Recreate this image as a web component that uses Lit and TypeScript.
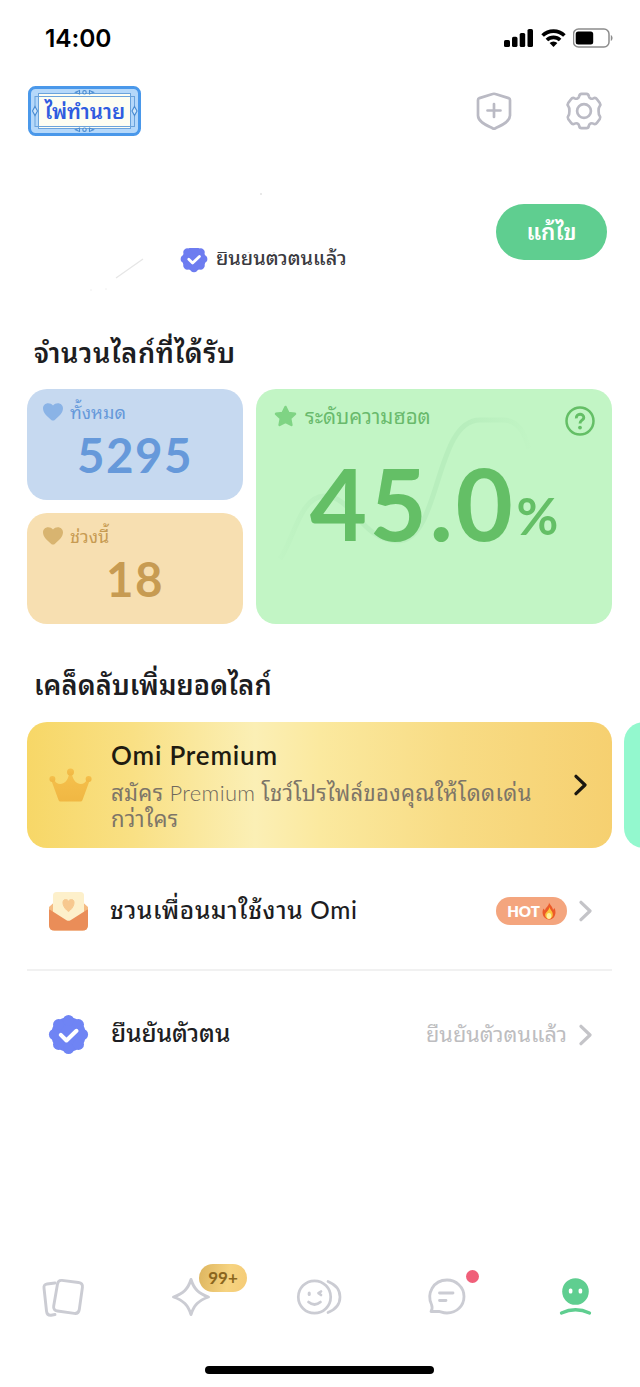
import { LitElement, html, css, svg } from "lit";
import { customElement } from "lit/decorators.js";

const base = css`
  :host { --face: Lato, "Noto Sans Thai Looped", "Noto Looped Thai", Loma, "Noto Sans Thai", "Noto Sans", sans-serif; }
`;

const heart = (color: string) => html`<svg class="heart" width="20" height="18" viewBox="0 0 20 18">
  <path fill=${color} d="M10 2.400C11.300.900 13 .200 14.800.200 17.800.200 20 2.400 20 5.300c0 4.800-4.600 8.400-8 11.400-1.200 1.200-2.800 1.200-4 0C4.600 13.700 0 10.100 0 5.300 0 2.400 2.200.200 5.200.200 7 .200 8.700.900 10 2.400z"/>
</svg>`;

const seal = (size: number, color: string) => html`<svg class="seal" width=${size} height=${size} viewBox="-20 -20 40 40">
  <g fill=${color}>
    <circle r="16.900"/>
    ${[0, 1, 2, 3, 4, 5, 6, 7].map((i) => svg`<circle r="5.400" cy="-13.700" transform="rotate(${i * 45})"/>`)}
  </g>
  <path d="M-7.500.400-2 5.800 7.800-3.600" fill="none" stroke="#fff" stroke-width="4" stroke-linecap="round" stroke-linejoin="round"/>
</svg>`;

const chevron = (color: string) => html`<svg width="14" height="22" viewBox="0 0 14 22">
  <path d="M2 2.300 11 11 2 19.700" fill="none" stroke=${color} stroke-width="3.200" stroke-linecap="round" stroke-linejoin="round"/>
</svg>`;

@customElement("status-bar")
class StatusBar extends LitElement {
  static styles = css`
    :host { display: flex; height: 76px; align-items: center; justify-content: space-between; padding: 0 26px 0 45px; box-sizing: border-box; }
    .time { font: 600 24.500px/30px Inter, sans-serif; color: #000; letter-spacing: -0.1px; }
    .system { display: flex; align-items: center; }
    .wifi { margin: 0 7px 0 7px; }
  `;
  render() {
    return html`
      <span class="time">14:00</span>
      <div class="system">
        <svg width="30" height="20" viewBox="0 0 30 20">
          <rect x="0" y="12" width="6" height="7" rx="1.600"/><rect x="8" y="8.800" width="5.500" height="10.200" rx="1.600"/>
          <rect x="15.700" y="5" width="5.500" height="14" rx="1.600"/><rect x="23.500" y="1" width="5.500" height="18" rx="1.600"/>
        </svg>
        <svg class="wifi" width="25" height="20" viewBox="0 0 25 20">
          <g fill="none" stroke="#000" stroke-width="3.700"><path d="M1.600 7.500a15.600 15.600 0 0 1 21.800 0"/><path d="M5.900 12a9.600 9.600 0 0 1 13.200 0"/></g>
          <path d="M12.500 19 8.600 15.100a5.600 5.600 0 0 1 7.800 0z"/>
        </svg>
        <svg width="41" height="20" viewBox="0 0 41 20">
          <rect x="0.500" y="1" width="35.500" height="18" rx="5" fill="none" stroke="#8c8c8c" stroke-width="1.500"/>
          <rect x="2.700" y="3.500" width="17.500" height="13" rx="2.500"/>
          <path d="M37.800 7v6c2.300-1 2.300-5 0-6z" fill="#8c8c8c"/>
        </svg>
      </div>`;
  }
}

@customElement("top-bar")
class TopBar extends LitElement {
  static styles = [base, css`
    :host { display: flex; height: 70px; padding: 0 36px 0 28px; align-items: center; box-sizing: border-box; }
    .tarot { display: grid; width: 113px; height: 50px; margin-right: auto; }
    .tarot > * { grid-area: 1 / 1; }
    .label { place-self: center; font: 600 20.700px/30px var(--face); color: #2f5be0; white-space: nowrap; padding-left: 1px; }
    .gear { margin-left: 52px; }
  `];
  render() {
    return html`
      <div class="tarot">
        <svg width="113" height="50" viewBox="0 0 113 50">
          <rect x="1.500" y="1.500" width="110" height="47" rx="6" fill="#b5d8fa" stroke="#4a98ea" stroke-width="3"/>
          <rect x="10.500" y="7" width="92.500" height="36" fill="#fdfdf2"/>
          <g fill="none" stroke="#6ba3dc" stroke-width="1"><rect x="10.500" y="7.500" width="92" height="35"/><rect x="7" y="10.500" width="99.500" height="30"/></g>
          <g fill="#cfe6fb" stroke="#4a8cd2" stroke-width="1.100">
            <path d="M7 20.500 9.500 25 7 29.500 4.500 25zM106.500 20.500 109 25 106.500 29.500 104 25z"/>
            <path d="M51.500 4.500v3.500l-4-1.750zM61.500 4.500v3.500l4-1.750zM51.500 42v3.500l-4-1.750zM61.500 42v3.500l4-1.750z"/>
            <circle cx="56.500" cy="6.300" r="1.700"/><circle cx="56.500" cy="43.700" r="1.700"/>
          </g>
        </svg>
        <span class="label">ไพ่ทำนาย</span>
      </div>
      <svg width="36" height="40" viewBox="0 0 36 40" fill="none" stroke="#babac4" stroke-width="2.700" stroke-linejoin="round" stroke-linecap="round">
        <path d="M16.600 3Q18 2.500 19.400 3L32.600 7.100Q34 7.600 34 9V24.500C34 31 25 34.500 19.500 37.200Q18 38 16.500 37.200C11 34.500 2 31 2 24.500V9Q2 7.600 3.400 7.100z"/>
        <path d="M18 13v13M11.500 19.500h13"/>
      </svg>
      <svg class="gear" width="40" height="40" viewBox="-20 -20 40 40" fill="none" stroke="#babac4" stroke-width="2.700" stroke-linejoin="round">
        <circle r="6.900"/>
        <path d="M-4.900-14.500Q-4.500-17.200-2.500-17.200H2.500Q4.500-17.200 4.900-14.500C5.300-12.700 7.500-11.700 9.300-12.600Q11.500-13.800 13-11.700L15.800-8Q16.900-6.500 15.700-4.900C14.200-3.200 14.200 3.200 15.700 4.900Q16.900 6.500 15.800 8L13 11.700Q11.500 13.800 9.300 12.600C7.500 11.700 5.300 12.700 4.900 14.500Q4.500 17.200 2.500 17.200H-2.500Q-4.500 17.200-4.900 14.500C-5.300 12.700-7.500 11.700-9.300 12.600Q-11.500 13.800-13 11.700L-15.800 8Q-16.900 6.500-15.700 4.900C-14.200 3.200-14.200-3.200-15.700-4.900Q-16.900-6.500-15.800-8L-13-11.700Q-11.500-13.800-9.300-12.600C-7.500-11.700-5.300-12.700-4.900-14.500z"/>
      </svg>`;
  }
}

@customElement("profile-summary")
class ProfileSummary extends LitElement {
  static styles = [base, css`
    :host { display: flex; height: 170px; box-sizing: border-box; padding: 58px 33px 0 88px; align-items: flex-start; }
    .trace { margin-top: -12px; margin-right: -84px; flex: none; }
    .verified { position: relative; display: flex; align-items: center; gap: 8px; margin: 39px auto 0 0; height: 32px; flex: none; }
    .fade { position: absolute; left: 36px; top: 0; width: 98px; height: 9px; background: #fff; }
    .fade.icon { left: 0; width: 28px; height: 5px; }
    .text { font: 500 19.800px/28px var(--face); padding-bottom: 4px; color: #3a3a40; white-space: nowrap; }
    .edit { width: 111px; height: 56px; border: 0; border-radius: 28px; background: #5fce90; color: #fff; font: 600 22.500px/30px var(--face); padding: 0; }
  `];
  render() {
    return html`
      <svg class="trace" width="176" height="100" viewBox="0 0 176 100">
        <path d="M28 86 55 67" stroke="#e6e6e6" stroke-width="1.300"/><circle cx="173" cy="2" r="1" fill="#e2e2e2"/>
        <path d="M2 98h2M17 97h2" stroke="#f0f0f0"/>
      </svg>
      <div class="verified">${seal(28, "#6d7cf0")}<span class="text">ยืนยันตัวตนแล้ว</span><i class="fade icon"></i><i class="fade"></i></div>
      <button class="edit">แก้ไข</button>`;
  }
}

@customElement("like-stats")
class LikeStats extends LitElement {
  static styles = [base, css`
    :host { display: block; height: 332px; }
    .title { margin: 0; height: 73px; padding: 0 34px; font: 600 27px/73px var(--face); letter-spacing: 0.6px; color: #1d1d22; }
    .grid { display: grid; grid-template: 111px 111px / 216px 356px; gap: 13px; margin-left: 27px; }
    .card { border-radius: 20px; box-sizing: border-box; overflow: hidden; }
    .blue { background: #c6d9f0; color: #6699da; }
    .sand { background: #f7dfb1; color: #c79b52; }
    .row { display: flex; align-items: center; gap: 7px; height: 30px; padding: 8px 16px 0; font: 400 18px/30px var(--face); }
    .value { text-align: center; font: 700 47.500px/56px Lato, sans-serif; letter-spacing: 1.4px; }
    .hot { grid-area: 1 / 2 / 3 / 3; background: #c2f5c5; color: #64bf66; display: grid; }
    .hot > * { grid-area: 1 / 1; }
    .hot .row { gap: 8px; padding: 12px 17px 0 18px; height: 40px; font-size: 20.500px; align-items: flex-start; color: #69ba6c; }
    .hot .label { flex: 1; }
    .star { margin-top: 4px; }
    .help { margin-top: 5px; }
    .percent { display: flex; align-items: flex-start; justify-content: center; padding-top: 54px; font: 700 99px/120px Lato, sans-serif; letter-spacing: 2.500px; }
    .unit { font-size: 51px; font-weight: 700; line-height: 60px; letter-spacing: 0; margin: 43px 0 0 1px; }
  `];
  render() {
    return html`
      <h2 class="title">จำนวนไลก์ที่ได้รับ</h2>
      <div class="grid">
        <div class="card blue"><div class="row">${heart("#8ab3e6")}<span>ทั้งหมด</span></div><div class="value">5295</div></div>
        <div class="card sand"><div class="row">${heart("#d8b470")}<span>ช่วงนี้</span></div><div class="value">18</div></div>
        <div class="card hot">
          <svg width="356" height="235" viewBox="0 0 356 235" fill="none">
            <defs><linearGradient id="w" x1="15" x2="278" y1="0" y2="0" gradientUnits="userSpaceOnUse"><stop stop-color="#b8eebd" stop-opacity="0"/><stop offset=".25" stop-color="#b8eebd"/><stop offset=".75" stop-color="#b8eebd"/><stop offset="1" stop-color="#b8eebd" stop-opacity="0"/></linearGradient></defs>
            <path d="M24 170C38 150 44 107 69 107C97 107 105 152 142 152C185 152 178 31 224 31H248C262 32 268 42 273 60" stroke="url(#w)" stroke-width="5"/>
          </svg>
          <div class="percent"><span>45.0</span><span class="unit">%</span></div>
          <div class="row">
            <svg class="star" width="23" height="22" viewBox="0 0 23 22"><path d="M11.500 2 14.300 7.900 21 8.800 16.200 13.400 17.400 20 11.500 17 5.600 20 6.800 13.400 2 8.800 8.700 7.900z" fill="#7fd484" stroke="#7fd484" stroke-width="2.500" stroke-linejoin="round"/></svg>
            <span class="label">ระดับความฮอต</span>
            <svg class="help" width="30" height="30" viewBox="0 0 30 30" fill="none" stroke="#64bf66" stroke-width="2.500"><circle cx="15" cy="15" r="13.500"/><path d="M11.300 12.300C11 7 18.900 7 18.800 11.600 18.700 14.300 15 14.200 15 17.500" stroke-width="2.900"/><circle cx="15" cy="21.600" r="1.900" fill="#64bf66" stroke="none"/></svg>
          </div>
        </div>
      </div>`;
  }
}

@customElement("boost-tips")
class BoostTips extends LitElement {
  static styles = [base, css`
    :host { display: block; height: 201px; overflow: hidden; }
    .title { margin: 0; height: 74px; padding: 0 34px; font: 600 27px/73px var(--face); letter-spacing: 0.150px; color: #1d1d22; }
    .carousel { display: flex; gap: 12px; margin-left: 27px; height: 126px; }
    .premium { display: flex; flex: none; width: 585px; border-radius: 20px; box-sizing: border-box; padding: 0 24px 0 22px; align-items: center; background: linear-gradient(90deg, #f7d767 0%, #f9e084 18%, #fbefb5 39%, #fbe99f 50%, #f8dc85 72%, #f6d070 100%); }
    .copy { width: 440px; margin: 0 auto 0 19px; align-self: flex-start; padding-top: 17px; }
    .name { font: 600 26px/32px Lato, sans-serif; letter-spacing: 0.8px; color: #201b10; }
    .desc { margin-top: 9px; font: 400 22px/26px var(--face); letter-spacing: 0.36px; color: #7d7568; white-space: nowrap; }
    .light { font-weight: 300; color: #6f685c; }
    .next { flex: none; width: 585px; border-radius: 20px; background: #93f8ce; }
  `];
  render() {
    return html`
      <h2 class="title">เคล็ดลับเพิ่มยอดไลก์</h2>
      <div class="carousel">
        <div class="premium">
          <svg width="43" height="34" viewBox="0 0 43 34">
            <defs><linearGradient id="c" x1="0" x2="0" y1="0" y2="1"><stop stop-color="#f5c04c"/><stop offset="1" stop-color="#f0b743"/></linearGradient></defs>
            <g fill="url(#c)"><path d="M2 11.500 4.500 10.500C8 19.500 18.500 17 20 6h3C24.500 17 35 19.500 38.500 10.500L41 11.500 33.500 32Q33 33.500 31.500 33.500H11.500Q10 33.500 9.500 32z"/><circle cx="21.500" cy="4" r="3.500"/><circle cx="3.400" cy="11" r="3"/><circle cx="39.600" cy="11" r="3"/></g>
          </svg>
          <div class="copy"><div class="name">Omi Premium</div><div class="desc">สมัคร <span class="light">Premium</span> โชว์โปรไฟล์ของคุณให้โดดเด่น<br>กว่าใคร</div></div>
          ${chevron("#1b1710")}
        </div>
        <div class="next"></div>
      </div>`;
  }
}

@customElement("menu-list")
class MenuList extends LitElement {
  static styles = [base, css`
    :host { display: block; height: 397px; padding: 4px 28px 0 27px; box-sizing: border-box; }
    .item { display: flex; align-items: center; height: 116px; padding: 0 19px 0 21px; }
    .item + .item { border-top: 2px solid #f1f1f1; height: 127px; }
    .name { margin: 0 auto 0 22px; padding-bottom: 3px; font: 500 24.300px/34px var(--face); color: #1d1d22; }
    .invite { margin-left: 21px; letter-spacing: 0.7px; }
    .hot { display: flex; align-items: center; justify-content: center; gap: 2px; width: 71px; height: 28px; border-radius: 14px; background: #f4a57e; color: #fff; font: 800 15px/28px Lato, sans-serif; margin-right: 12px; }
    .status { font: 400 21.700px/34px var(--face); color: #bdbdc0; margin-right: 12px; padding-bottom: 2px; }
  `];
  render() {
    return html`
      <div class="item">
        <svg width="41" height="41" viewBox="0 0 41 41">
          <path d="M1 16 6 11.500H35L40 16V34Q40 39.500 34.500 39.500H6.500Q1 39.500 1 34z" fill="#f5bb82"/>
          <path d="M5 4.500Q5 1 8.500 1H32.500Q36 1 36 4.500V24L20.500 32 5 24z" fill="#fdf0cb"/>
          <path d="M20.500 20.500C14 16 13.500 8.500 17.500 8.500Q19.500 8.500 20.500 10 21.500 8.500 23.500 8.500C27.500 8.500 27 16 20.500 20.500z" fill="#f7c88f" stroke="#f7c88f"/>
          <path d="M1 19Q1 18 2 18.700L18.500 29.200Q20.500 30.300 22.500 29.200L39 18.700Q40 18 40 19V34Q40 39.500 34.500 39.500H6.500Q1 39.500 1 34z" fill="#ea8d58"/>
        </svg>
        <span class="name invite">ชวนเพื่อนมาใช้งาน Omi</span>
        <span class="hot">HOT<svg width="14" height="18" viewBox="0 0 14 18"><path d="M7 .500C8 3 11 5 11 8L12.500 6C15 11 12.500 17.500 7 17.500S-1 11 1.500 6.500L3 8.500C3.500 5 7 4.500 7 .500z" fill="#ec5a28"/><path d="M7.500 5C8 8 11 9 10.800 13 10.500 18 3.300 18 3.200 13 3.200 10 7 9 7.500 5z" fill="#fbc53c"/><ellipse cx="7" cy="14" rx="2.300" ry="3" fill="#fff1a0"/></svg></span>
        ${chevron("#c4c4c8")}
      </div>
      <div class="item">${seal(41, "#6f84f4")}<span class="name">ยืนยันตัวตน</span><span class="status">ยืนยันตัวตนแล้ว</span>${chevron("#c4c4c8")}</div>`;
  }
}

@customElement("tab-bar")
class TabBar extends LitElement {
  static styles = css`
    :host { display: flex; flex-direction: column; height: 141px; box-sizing: border-box; align-items: center; }
    .tabs { display: grid; grid-template-columns: repeat(5, 128px); width: 640px; height: 120px; }
    .tab { position: relative; display: flex; justify-content: center; padding: 30px 2px 0 0; }
    .tab.me { padding-right: 0; }
    .tab svg { display: block; height: 42px; flex: none; }
    .count { position: absolute; left: 71px; top: 18px; width: 48px; height: 28px; border-radius: 14px; background: linear-gradient(100deg, #ddb55f, #f6d380 60%, #f5cb76); color: #8b661d; font: 700 17px/28px Lato, sans-serif; text-align: center; }
    .dot { position: absolute; left: 82px; top: 24px; width: 13px; height: 13px; border-radius: 50%; background: #f05f79; }
    .home { width: 229px; height: 8px; border-radius: 4px; background: #000; margin-right: 2px; }
  `;
  render() {
    return html`
      <div class="tabs">
        <div class="tab"><svg width="44" height="42" viewBox="0 0 44 42" fill="none" stroke="#cbccd3" stroke-width="2.900" stroke-linecap="round" stroke-linejoin="round">
          <path d="M14 7 6 8Q2.500 8.500 3 12L5.500 35Q6 39.500 10 39.200L14 38.500"/>
          <path d="M21 4.400 37.500 6.500Q42 7 41.400 11.500L38.300 33.500Q37.600 38 33.200 37.400L16.500 35Q12 34.400 12.700 30L16.500 8Q17.200 4 21 4.400z"/></svg></div>
        <div class="tab"><svg width="42" height="42" viewBox="0 0 42 42" fill="none" stroke="#cbccd3" stroke-width="2.900" stroke-linejoin="round">
          <path d="M21 3.500C24 13 28.500 17.500 38.500 21 28.500 24.500 24 29 21 38.500 18 29 13.500 24.500 3.500 21 13.500 17.500 18 13 21 3.500z"/></svg><span class="count">99+</span></div>
        <div class="tab"><svg width="46" height="42" viewBox="0 0 46 42" fill="none" stroke="#cbccd3" stroke-width="2.700" stroke-linecap="round" stroke-linejoin="round">
          <circle cx="18.500" cy="21" r="16.200"/><path d="M32 5.500C48 12 48 30 32 36.500M12.500 26Q18.500 31 24.500 26M25 15.500 22.500 17.200 25 19"/><path d="M13.200 17v1.500" stroke-width="3"/></svg></div>
        <div class="tab"><svg width="42" height="42" viewBox="0 0 42 42" fill="none" stroke="#cbccd3" stroke-width="2.800" stroke-linecap="round" stroke-linejoin="round">
          <path d="M5 35.500C7 32.500 6.500 31 5.500 28.500 .5 18 7 4 21 4 30 4 38 11 38 20.500S30.500 37 21 37C17.500 37 15.500 36 13 35.300z"/><path d="M13.500 17H27M13.500 24.500H20"/></svg><i class="dot"></i></div>
        <div class="tab me"><svg width="42" height="42" viewBox="0 0 42 42"><circle cx="20.500" cy="15.500" r="13.300" fill="#5fce90"/><g fill="#fff"><rect x="13.800" y="12.500" width="3.600" height="5" rx="1.600"/><rect x="23.600" y="12.500" width="3.600" height="5" rx="1.600"/></g><path d="M6.500 37Q20.500 30.500 34.500 37" fill="none" stroke="#5fce90" stroke-width="3.300" stroke-linecap="round"/></svg></div>
      </div>
      <div class="home"></div>`;
  }
}

@customElement("app-root")
class AppRoot extends LitElement {
  static styles = css`
    :host { display: flex; flex-direction: column; width: 640px; height: 1387px; background: #fff; overflow: hidden; }
    :host > * { flex: none; }
  `;
  render() {
    return html`<status-bar></status-bar><top-bar></top-bar><profile-summary></profile-summary><like-stats></like-stats><boost-tips></boost-tips><menu-list></menu-list><tab-bar></tab-bar>`;
  }
}
